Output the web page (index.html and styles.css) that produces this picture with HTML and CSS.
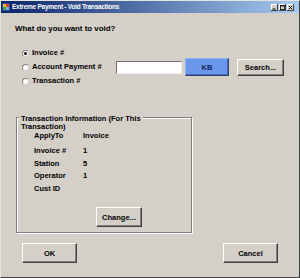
FILE: index.html
```html
<!DOCTYPE html>
<html>
<head>
<meta charset="utf-8">
<title>Extreme Payment - Void Transactions</title>
<link rel="stylesheet" href="styles.css">
</head>
<body>
<div class="window">
  <div class="titlebar">
    <svg class="app-icon" width="8" height="8" viewBox="0 0 8 8">
      <rect x="0" y="0" width="8" height="8" fill="#2a4aa0"/>
      <rect x="1" y="1" width="3" height="3" fill="#f0c020"/>
      <rect x="4" y="1" width="3" height="3" fill="#e04020"/>
      <rect x="1" y="4" width="3" height="3" fill="#40a040"/>
      <rect x="4" y="4" width="3" height="3" fill="#7ab0f0"/>
    </svg>
    <span class="title">Extreme Payment - Void Transactions</span>
    <div class="ctrls">
      <span class="ctrl"><svg width="7" height="7" viewBox="0 0 7 7"><rect x="1.5" y="4.5" width="3" height="1" fill="#000"/></svg></span>
      <span class="ctrl"><svg width="7" height="7" viewBox="0 0 7 7"><rect x="1.5" y="1.5" width="4" height="4" fill="none" stroke="#000" stroke-width="0.8"/><rect x="1.5" y="1.3" width="4" height="1" fill="#000"/></svg></span>
      <span class="ctrl"><svg width="7" height="7" viewBox="0 0 7 7"><path d="M1.8 1.8 L5.2 5.2 M5.2 1.8 L1.8 5.2" stroke="#000" stroke-width="1"/></svg></span>
    </div>
  </div>
  <div class="content">
    <p class="prompt">What do you want to void?</p>
    <div class="options">
      <div class="opt-row small">
        <span class="radio checked"></span><span class="opt-label">Invoice #</span>
      </div>
      <div class="opt-row big">
        <span class="radio"></span><span class="opt-label wide">Account Payment #</span>
        <input class="field" type="text" value="">
        <button class="btn kb">KB</button>
        <button class="btn search">Search...</button>
      </div>
      <div class="opt-row small">
        <span class="radio"></span><span class="opt-label">Transaction #</span>
      </div>
    </div>
    <div class="group">
      <div class="group-title">Transaction Information (For This<br>Transaction)</div>
      <div class="info">
        <span class="k first">ApplyTo</span><span class="v first">Invoice</span>
        <span class="k">Invoice #</span><span class="v">1</span>
        <span class="k">Station</span><span class="v">5</span>
        <span class="k">Operator</span><span class="v">1</span>
        <span class="k">Cust ID</span><span class="v"></span>
      </div>
      <button class="btn change">Change...</button>
    </div>
    <div class="actions">
      <button class="btn action">OK</button>
      <button class="btn action">Cancel</button>
    </div>
  </div>
</div>
</body>
</html>
```

FILE: styles.css
```css
* { box-sizing: border-box; }
html, body {
  margin: 0;
  padding: 0;
  background: #d4d0c8;
}
body {
  font-family: "Liberation Sans", Arial, sans-serif;
  color: #000;
}
.window {
  width: 300px;
  height: 278px;
  background: #d4d0c8;
  border: 1px solid;
  border-color: #e6e4de #404040 #404040 #e6e4de;
  display: flex;
  flex-direction: column;
  overflow: hidden;
}
.titlebar {
  height: 12px;
  flex: 0 0 12px;
  display: flex;
  align-items: center;
  padding: 0 5px 0 1px;
  background: linear-gradient(to right, #0a246a, #a6caf0);
}
.app-icon { flex: 0 0 8px; margin-right: 2px; }
.title {
  color: #fff;
  font-weight: bold;
  font-size: 6.5px;
  letter-spacing: -0.25px;
  line-height: 12px;
  white-space: nowrap;
}
.ctrls {
  margin-left: auto;
  display: flex;
  gap: 1px;
}
.ctrl {
  width: 7px;
  height: 7px;
  background: #d4d0c8;
  display: flex;
  box-shadow: inset -1px -1px #404040, inset 1px 1px #fff;
}
.content {
  flex: 1;
  display: flex;
  flex-direction: column;
}
.prompt {
  margin: 11px 0 0 14px;
  font-size: 7.9px;
  font-weight: bold;
  line-height: 10px;
}
.options {
  margin: 14px 0 0 21px;
  display: flex;
  flex-direction: column;
}
.opt-row {
  display: flex;
  align-items: center;
}
.opt-row.small { height: 10px; }
.opt-row.big { height: 18px; }
.radio {
  width: 7px;
  height: 7px;
  flex: 0 0 7px;
  border-radius: 50%;
  background: #fff;
  border: 1px solid #808080;
  border-right-color: #d4d0c8;
  border-bottom-color: #d4d0c8;
  margin-right: 3px;
  display: flex;
  align-items: center;
  justify-content: center;
}
.radio.checked::after {
  content: "";
  width: 3px;
  height: 3px;
  border-radius: 50%;
  background: #000;
}
.opt-label {
  font-size: 7.5px;
  font-weight: bold;
  line-height: 10px;
  white-space: nowrap;
}
.opt-label.wide { flex: 0 0 84px; }
.field {
  width: 66px;
  height: 13px;
  margin: 0;
  padding: 0;
  background: #fff;
  border: 1px solid;
  border-color: #707070 #f0f0f0 #f0f0f0 #707070;
  outline: none;
}
.btn {
  margin: 0;
  padding: 0;
  font-family: "Liberation Sans", Arial, sans-serif;
  font-size: 7.5px;
  font-weight: bold;
  color: #000;
  background: #d4d0c8;
  border: 1px solid;
  border-color: #fff #404040 #404040 #fff;
  box-shadow: inset -1px -1px #808080;
  display: flex;
  align-items: center;
  justify-content: center;
}
.kb {
  width: 44px;
  height: 18px;
  margin-left: 3px;
  background: #6a96ec;
  color: #10245a;
  border-color: #8fb4f4 #2a3e70 #2a3e70 #8fb4f4;
  box-shadow: inset -1px -1px #4a6cb8;
}
.search {
  width: 47px;
  height: 17px;
  margin-left: 8px;
}
.group {
  margin: 31px 0 0 15px;
  width: 176px;
  border: 1px solid #808080;
  box-shadow: inset 1px 1px #fff, 1px 1px #fff;
  padding: 0 0 5px 0;
  display: flex;
  flex-direction: column;
}
.group-title {
  margin: -3px 0 0 2px;
  padding: 0 2px;
  width: fit-content;
  background: #d4d0c8;
  font-size: 7.5px;
  font-weight: bold;
  line-height: 8px;
  white-space: nowrap;
}
.info {
  display: grid;
  grid-template-columns: 49px auto;
  row-gap: 2.5px;
  padding-left: 17px;
  font-size: 7.5px;
  font-weight: bold;
  line-height: 10px;
}
.info .first { margin-bottom: 2.5px; }
.change {
  margin: 13.5px 0 0 79px;
  width: 46px;
  height: 20px;
}
.actions {
  margin: 10px 21px 0 21px;
  display: flex;
  justify-content: space-between;
}
.action {
  width: 55px;
  height: 20px;
}
```
